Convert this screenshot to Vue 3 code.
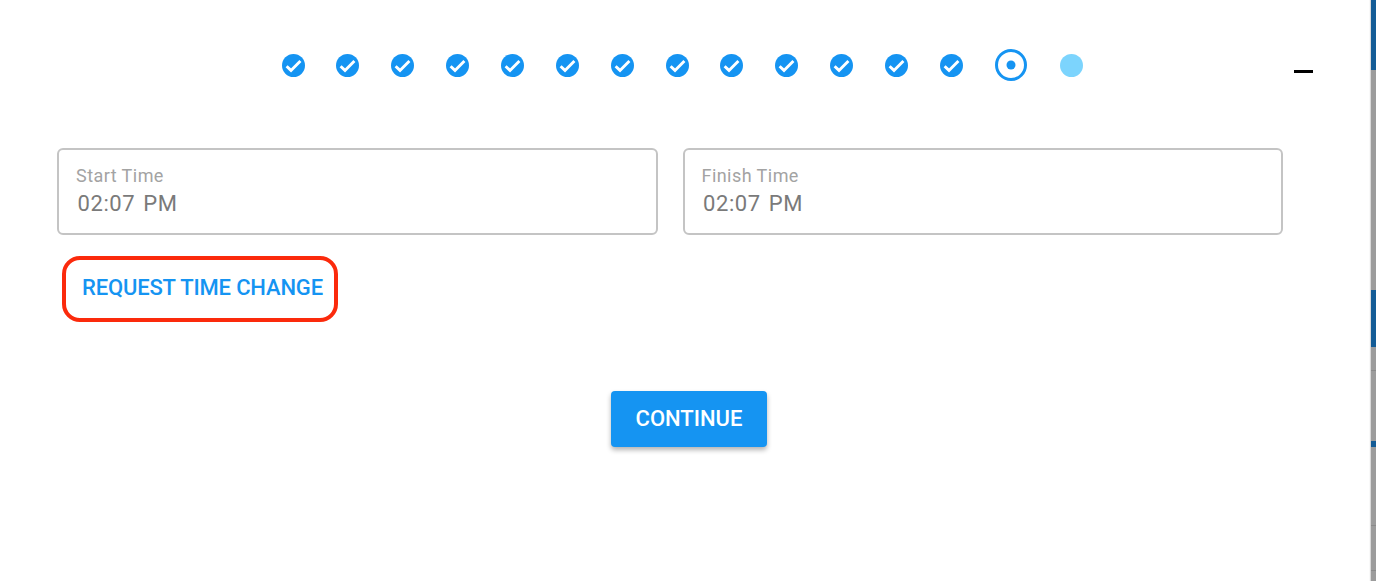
<script setup>
const doneSteps = Array.from({ length: 13 }, (_, i) => i)
const fields = [
  { label: 'Start Time', value: '02:07 PM' },
  { label: 'Finish Time', value: '02:07 PM' },
]
</script>

<template>
  <div class="page">
    <main class="main">
      <div class="stepper-row">
        <div class="stepper">
          <svg v-for="s in doneSteps" :key="s" class="step" viewBox="0 0 23 23">
            <circle cx="11.5" cy="11.5" r="11.5" fill="#1594f2" />
            <path d="M4.6 12.2l4.4 4.2 9.4-9.5" fill="none" stroke="#fff" stroke-width="2.9" />
          </svg>
          <svg class="step-current" viewBox="0 0 32 32">
            <circle cx="16" cy="16" r="14.5" fill="none" stroke="#1594f2" stroke-width="3" />
            <circle cx="16" cy="16" r="4.5" fill="#1594f2" />
          </svg>
          <span class="step-next"></span>
        </div>
        <span class="dash"></span>
      </div>

      <div class="fields">
        <div v-for="f in fields" :key="f.label" class="field">
          <span class="field-label">{{ f.label }}</span>
          <span class="field-value">{{ f.value }}</span>
        </div>
      </div>

      <div class="request">
        <span class="request-text">REQUEST TIME CHANGE</span>
      </div>

      <div class="actions">
        <button class="continue">CONTINUE</button>
      </div>
    </main>
    <aside class="strip">
      <div class="seg blue s1"></div>
      <div class="seg grey s2"></div>
      <div class="seg blue s3"></div>
      <div class="seg grey s4"></div>
      <div class="seg line"></div>
      <div class="seg grey s5"></div>
      <div class="seg blue s6"></div>
      <div class="seg grey s7"></div>
      <div class="seg line"></div>
      <div class="seg grey s8"></div>
      <div class="seg line"></div>
      <div class="seg grey s9"></div>
    </aside>
  </div>
</template>

<style>
html, body { margin: 0; background: #fff; overflow: hidden; }
</style>

<style scoped>
.page {
  display: flex;
  width: 1376px;
  height: 581px;
  overflow: hidden;
  font-family: Roboto, "Liberation Sans", sans-serif;
  background: #fff;
}
.main {
  flex: 1;
  min-width: 0;
  padding-top: 49px;
}
.stepper-row {
  display: flex;
  align-items: center;
  height: 32px;
  padding-left: 281.6px;
}
.stepper {
  display: flex;
  align-items: center;
  gap: 31.85px;
}
.step { width: 23px; height: 23px; flex: none; display: block; }
.step-current { width: 32px; height: 32px; flex: none; display: block; margin: 0 1px 0 .4px; }
.step-next {
  width: 23px;
  height: 23px;
  border-radius: 50%;
  background: #7cd4fd;
  flex: none;
}
.dash {
  width: 19px;
  height: 3px;
  background: #000;
  margin-left: auto;
  margin-right: 58px;
  position: relative;
  top: 6px;
}
.fields {
  display: flex;
  gap: 25px;
  margin: 67px 0 0 57px;
}
.field {
  box-sizing: border-box;
  width: 600.5px;
  height: 87px;
  border: 2px solid #c4c4c4;
  border-radius: 6px;
  padding: 15px 0 0 17px;
  display: flex;
  flex-direction: column;
}
.field-label {
  font-size: 18px;
  line-height: 22px;
  letter-spacing: .45px;
  color: #a3a3a3;
}
.field-value {
  font-size: 22px;
  line-height: 28px;
  color: #7a7a7a;
  margin: 3px 0 0 1.5px;
  word-spacing: 2px;
  letter-spacing: .6px;
}
.request {
  box-sizing: border-box;
  width: 276px;
  height: 66px;
  margin: 21px 0 0 62px;
  border: 4px solid #fb2a0c;
  border-radius: 18px;
  padding: 0 0 3px 16px;
  display: flex;
  align-items: center;
}
.request-text {
  font-size: 22px;
  font-weight: 500;
  letter-spacing: -.16px;
  color: #1594f2;
  white-space: nowrap;
}
.actions {
  display: flex;
  margin: 69px 0 0 611px;
}
.continue {
  width: 156px;
  height: 56px;
  border: 0;
  border-radius: 4px;
  background: #1594f2;
  color: #fff;
  font-family: inherit;
  font-size: 22px;
  font-weight: 500;
  box-shadow: 0 3px 5px rgba(0, 0, 0, .3);
  padding: 0 0 2px;
}
.strip {
  width: 5px;
  flex: none;
  display: flex;
  flex-direction: column;
  box-shadow: -1px 0 1px rgba(0, 0, 0, .15);
}
.blue { background: #145c96; }
.grey { background: #9c9c9c; }
.line { height: 1px; background: #8a8a8a; }
.s1 { height: 70px; }
.s2 { height: 220px; }
.s3 { height: 57px; }
.s4 { height: 23px; }
.s5 { height: 70px; }
.s6 { height: 6px; }
.s7 { height: 78px; }
.s8 { height: 44px; }
.s9 { flex: 1; }
</style>
